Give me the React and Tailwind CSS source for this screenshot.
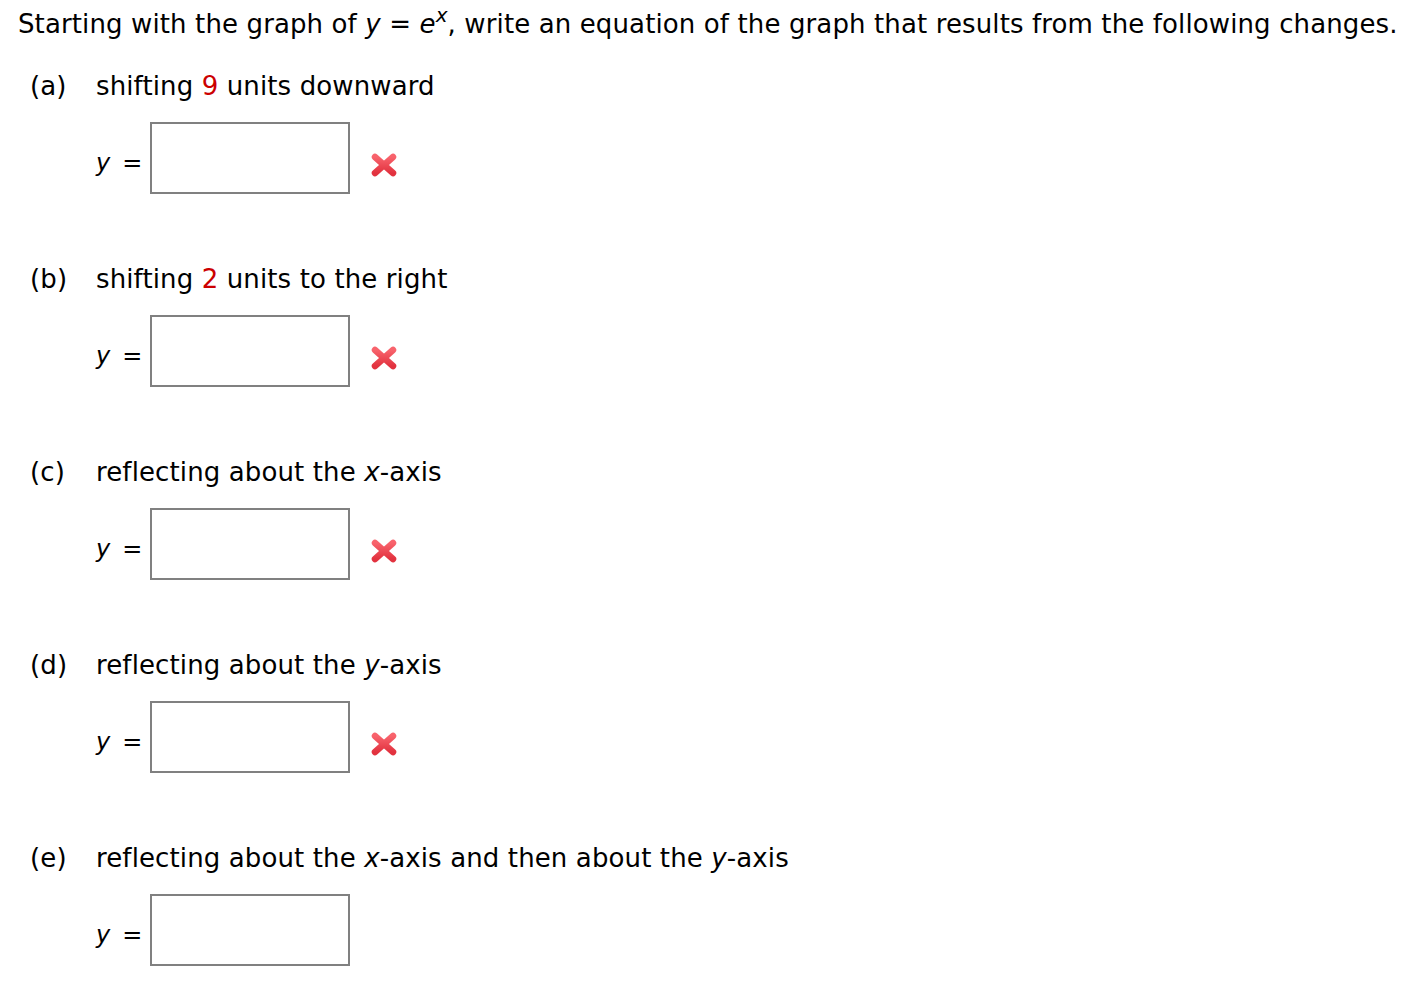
import React from 'react';

const font = { fontFamily: '"DejaVu Sans", Verdana, sans-serif' };

function WrongMark() {
  return (
    <svg width="28" height="26" viewBox="0 0 28 26" className="ml-[20px] mt-[14px]">
      <defs>
        <linearGradient id="xg" x1="0" y1="0" x2="0" y2="1">
          <stop offset="0" stopColor="#f8636c" />
          <stop offset="1" stopColor="#e2323f" />
        </linearGradient>
      </defs>
      <g stroke="url(#xg)" strokeWidth="6.5" strokeLinecap="round">
        <line x1="5" y1="5" x2="23" y2="21" />
        <line x1="23" y1="5" x2="5" y2="21" />
      </g>
    </svg>
  );
}

function Part({ letter, children, mark = true, first = false }) {
  return (
    <div className={first ? 'mt-[30px]' : 'mt-[69px]'}>
      <div className="flex leading-[32px] ml-[12px]">
        <span className="w-[66px]">({letter})</span>
        <span>{children}</span>
      </div>
      <div className="flex items-center mt-[20px] ml-[78px]">
        <span className="w-[54px] text-[24px] mt-[10px] flex gap-[12px]">
          <i>y</i>
          <span>=</span>
        </span>
        <div className="w-[200px] h-[72px] border-2 border-[#808080] bg-white" />
        {mark && <WrongMark />}
      </div>
    </div>
  );
}

export default function App() {
  return (
    <div className="bg-white text-black text-[26px] tracking-[0.12px] pl-[18px] pt-[8px] min-h-[995px]" style={font}>
      <div className="leading-[32px] whitespace-nowrap">
        Starting with the graph of <i>y</i> = <i>e</i>
        <sup className="text-[20px] -top-[11px]"><i>x</i></sup>, write an equation of the graph that results from the following changes.
      </div>
      <Part letter="a" first>
        shifting <span className="text-[#cc0000]">9</span> units downward
      </Part>
      <Part letter="b">
        shifting <span className="text-[#cc0000]">2</span> units to the right
      </Part>
      <Part letter="c">
        reflecting about the <i>x</i>-axis
      </Part>
      <Part letter="d">
        reflecting about the <i>y</i>-axis
      </Part>
      <Part letter="e" mark={false}>
        reflecting about the <i>x</i>-axis and then about the <i>y</i>-axis
      </Part>
    </div>
  );
}
